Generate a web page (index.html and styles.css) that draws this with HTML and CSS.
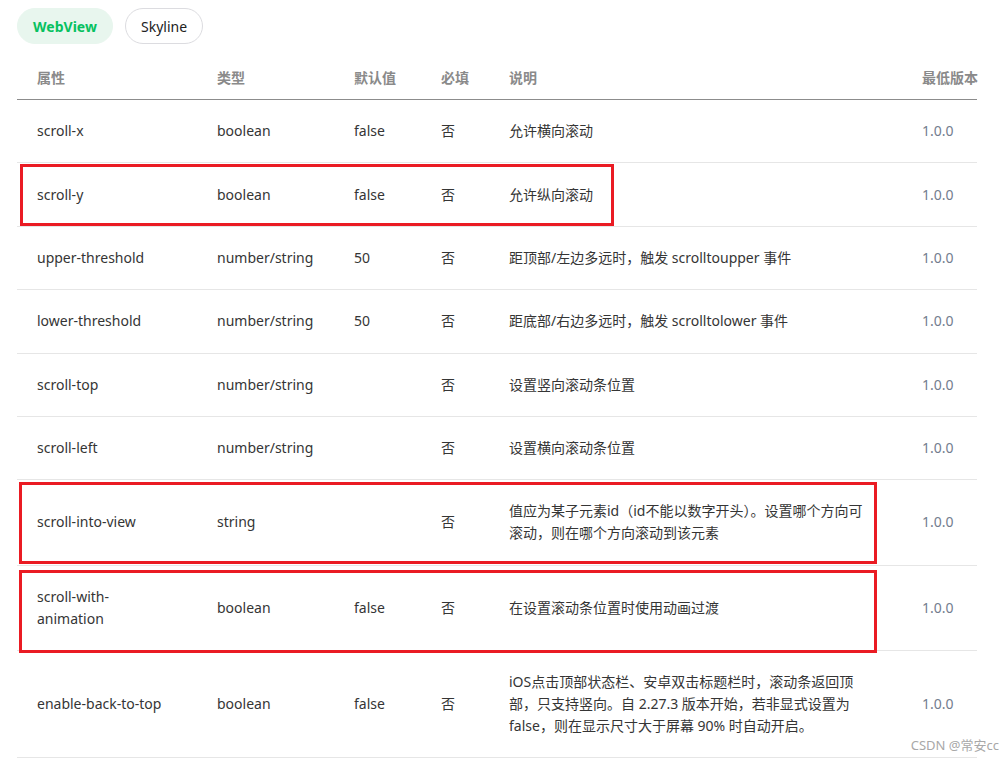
FILE: index.html
```html
<!DOCTYPE html>
<html lang="zh">
<head>
<meta charset="utf-8">
<link rel="stylesheet" href="styles.css">
</head>
<body>
<div class="page">
  <div class="tabs">
    <span class="tab tab-active">WebView</span>
    <span class="tab">Skyline</span>
  </div>
  <div class="table-wrap">
    <table class="props">
      <colgroup>
        <col class="c-name"><col class="c-type"><col class="c-def"><col class="c-req"><col class="c-desc"><col class="c-ver">
      </colgroup>
      <thead>
        <tr><th>属性</th><th>类型</th><th>默认值</th><th>必填</th><th>说明</th><th class="ver">最低版本</th></tr>
      </thead>
      <tbody>
        <tr><td>scroll-x</td><td>boolean</td><td>false</td><td>否</td><td class="desc">允许横向滚动</td><td class="ver">1.0.0</td></tr>
        <tr><td>scroll-y</td><td>boolean</td><td>false</td><td>否</td><td class="desc">允许纵向滚动</td><td class="ver">1.0.0</td></tr>
        <tr><td>upper-threshold</td><td>number/string</td><td>50</td><td>否</td><td class="desc">距顶部/左边多远时，触发 scrolltoupper 事件</td><td class="ver">1.0.0</td></tr>
        <tr><td>lower-threshold</td><td>number/string</td><td>50</td><td>否</td><td class="desc">距底部/右边多远时，触发 scrolltolower 事件</td><td class="ver">1.0.0</td></tr>
        <tr><td>scroll-top</td><td>number/string</td><td></td><td>否</td><td class="desc">设置竖向滚动条位置</td><td class="ver">1.0.0</td></tr>
        <tr><td>scroll-left</td><td>number/string</td><td></td><td>否</td><td class="desc">设置横向滚动条位置</td><td class="ver">1.0.0</td></tr>
        <tr><td>scroll-into-view</td><td>string</td><td></td><td>否</td><td class="desc">值应为某子元素id（id不能以数字开头）。设置哪个方向可滚动，则在哪个方向滚动到该元素</td><td class="ver">1.0.0</td></tr>
        <tr><td>scroll-with-animation</td><td>boolean</td><td>false</td><td>否</td><td class="desc">在设置滚动条位置时使用动画过渡</td><td class="ver">1.0.0</td></tr>
        <tr><td>enable-back-to-top</td><td>boolean</td><td>false</td><td>否</td><td class="desc">iOS点击顶部状态栏、安卓双击标题栏时，滚动条返回顶部，只支持竖向。自 2.27.3 版本开始，若非显式设置为 false，则在显示尺寸大于屏幕 90% 时自动开启。</td><td class="ver">1.0.0</td></tr>
      </tbody>
    </table>
    <div class="mark mark-1"></div>
    <div class="mark mark-2"></div>
    <div class="mark mark-3"></div>
    <div class="watermark">CSDN @常安cc</div>
  </div>
</div>
</body>
</html>
```

FILE: styles.css
```css
html, body {
  margin: 0;
  padding: 0;
  background: #ffffff;
}
body {
  font-family: "Noto Sans", "Noto Sans CJK SC", sans-serif;
  color: #353535;
  font-size: 14px;
}
.page {
  padding: 8px 22px 0 17px;
}
.tabs {
  display: flex;
  gap: 12px;
}
.tab {
  display: inline-flex;
  align-items: center;
  justify-content: center;
  height: 36px;
  padding: 0 15px;
  box-sizing: border-box;
  border: 1px solid #dcdce0;
  border-radius: 18px;
  font-size: 14px;
  color: #222;
}
.tab-active {
  background: #e8f6ee;
  border-color: #e8f6ee;
  color: #07c160;
  font-weight: 700;
  width: 96px;
}
.table-wrap {
  position: relative;
  margin-top: 12px;
}
.props {
  width: 960px;
  border-collapse: collapse;
  table-layout: fixed;
}
.c-name { width: 180px; }
.c-type { width: 137px; }
.c-def { width: 87px; }
.c-req { width: 68px; }
.c-desc { width: 413px; }
.c-ver { width: 75px; }
.props th {
  text-align: left;
  font-weight: 700;
  color: #8a8a8a;
  font-size: 14px;
  line-height: 22px;
  padding: 10px 20px 11px;
  border-bottom: 1px solid #8c8c8c;
  font-family: "Noto Sans CJK SC", sans-serif;
}
.props td {
  line-height: 22px;
  padding: 20.2px 20px;
  border-bottom: 1px solid #e6e6e6;
  vertical-align: middle;
  font-size: 14px;
}
.props td:first-child {
  padding-right: 26px;
}
.props th.ver, .props td.ver {
  padding-right: 0;
  white-space: nowrap;
}
.props td.ver {
  color: #737d8e;
}
.props td.desc {
  font-size: 14px;
  padding-right: 31px;
}
.mark {
  position: absolute;
  border: 3px solid #ea1b23;
  box-sizing: border-box;
}
.mark-1 { left: 3px; top: 108px; width: 594px; height: 62px; }
.mark-2 { left: 2px; top: 426px; width: 858px; height: 82px; }
.mark-3 { left: 2px; top: 514px; width: 858px; height: 83px; }
.watermark {
  position: absolute;
  right: -22px;
  bottom: 4px;
  font-size: 13px;
  line-height: 18px;
  color: #a8a8a8;
  white-space: nowrap;
  font-family: "Noto Sans", "Noto Sans CJK SC", sans-serif;
}
```
